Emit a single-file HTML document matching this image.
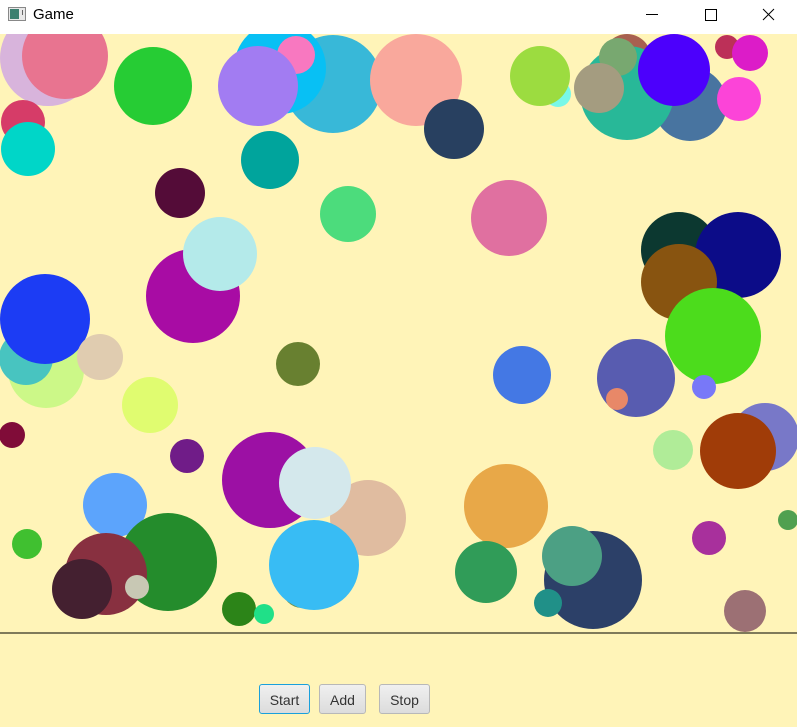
<!DOCTYPE html>
<html><head><style>
body{margin:0;width:797px;height:727px;overflow:hidden;background:#FFF4B8;font-family:"Segoe UI","Liberation Sans",sans-serif;position:relative}
.tb{position:absolute;left:0;top:0;width:797px;height:34px;background:#fff}
.tb .t{position:absolute;left:33px;top:6px;font-size:15px;color:#000}
.btn{position:absolute;top:684px;height:30px;border:1px solid #b8b8b8;border-radius:3px;background:linear-gradient(#f0f0f0,#dcdcdc);font-size:14px;color:#333;text-align:center;line-height:30px;box-sizing:border-box}
</style></head><body>
<div class="tb">
<svg style="position:absolute;left:8px;top:7px" width="18" height="14"><rect x="0.5" y="0.5" width="17" height="13" fill="#e8e8e8" stroke="#888"/><rect x="2" y="2" width="9" height="10" fill="#3c8070"/><rect x="14" y="3" width="1" height="5" fill="#666"/></svg>
<div class="t">Game</div>
<svg style="position:absolute;left:640px;top:0" width="157" height="34"><line x1="6" y1="14.5" x2="18" y2="14.5" stroke="#000"/><rect x="65.5" y="9.5" width="11" height="11" fill="none" stroke="#000"/><path d="M123 9L134 20M134 9L123 20" stroke="#000"/></svg>
</div>
<svg style="position:absolute;left:0;top:34px" width="797" height="600" viewBox="0 34 797 600">
<circle cx="48" cy="58" r="48" fill="#D8B4DC"/>
<circle cx="65" cy="56" r="43" fill="#E87490"/>
<circle cx="23" cy="122" r="22" fill="#D63C68"/>
<circle cx="28" cy="149" r="27" fill="#00D6C8"/>
<circle cx="153" cy="86" r="39" fill="#26CC34"/>
<circle cx="333" cy="84" r="49" fill="#38B8D8"/>
<circle cx="280" cy="68" r="46" fill="#08C0F4"/>
<circle cx="296" cy="55" r="19" fill="#F878C0"/>
<circle cx="258" cy="86" r="40" fill="#A27CF2"/>
<circle cx="416" cy="80" r="46" fill="#F9A89C"/>
<circle cx="454" cy="129" r="30" fill="#284060"/>
<circle cx="270" cy="160" r="29" fill="#00A49C"/>
<circle cx="180" cy="193" r="25" fill="#540C38"/>
<circle cx="348" cy="214" r="28" fill="#4CDC7C"/>
<circle cx="558" cy="94" r="13" fill="#78F8E8"/>
<circle cx="540" cy="76" r="30" fill="#9CDC40"/>
<circle cx="627" cy="58" r="24" fill="#A86050"/>
<circle cx="690" cy="104" r="37" fill="#4874A0"/>
<circle cx="627" cy="93" r="47" fill="#28B898"/>
<circle cx="618" cy="57" r="19" fill="#78A870"/>
<circle cx="599" cy="88" r="25" fill="#A49C80"/>
<circle cx="674" cy="70" r="36" fill="#4C00FC"/>
<circle cx="727" cy="47" r="12" fill="#BC3058"/>
<circle cx="750" cy="53" r="18" fill="#DC1CC8"/>
<circle cx="739" cy="99" r="22" fill="#FC44D8"/>
<circle cx="509" cy="218" r="38" fill="#E070A0"/>
<circle cx="679" cy="250" r="38" fill="#0C3830"/>
<circle cx="738" cy="255" r="43" fill="#0C0C88"/>
<circle cx="679" cy="282" r="38" fill="#885410"/>
<circle cx="713" cy="336" r="48" fill="#4CDC1C"/>
<circle cx="193" cy="296" r="47" fill="#A80CA4"/>
<circle cx="220" cy="254" r="37" fill="#B4EAEA"/>
<circle cx="46" cy="370" r="38" fill="#CCF888"/>
<circle cx="26" cy="358" r="27" fill="#48C4C0"/>
<circle cx="45" cy="319" r="45" fill="#1C3CF4"/>
<circle cx="100" cy="357" r="23" fill="#E0CCB0"/>
<circle cx="298" cy="364" r="22" fill="#688030"/>
<circle cx="150" cy="405" r="28" fill="#E0FC70"/>
<circle cx="522" cy="375" r="29" fill="#4478E4"/>
<circle cx="704" cy="387" r="12" fill="#7878F8"/>
<circle cx="636" cy="378" r="39" fill="#585CB0"/>
<circle cx="617" cy="399" r="11" fill="#E88868"/>
<circle cx="765" cy="437" r="34" fill="#7878C8"/>
<circle cx="738" cy="451" r="38" fill="#A03C08"/>
<circle cx="673" cy="450" r="20" fill="#B0EC98"/>
<circle cx="12" cy="435" r="13" fill="#800C38"/>
<circle cx="187" cy="456" r="17" fill="#701C88"/>
<circle cx="368" cy="518" r="38" fill="#E0BCA0"/>
<circle cx="270" cy="480" r="48" fill="#9C10A4"/>
<circle cx="315" cy="483" r="36" fill="#D4E8EC"/>
<circle cx="506" cy="506" r="42" fill="#E8A848"/>
<circle cx="115" cy="505" r="32" fill="#5CA4FC"/>
<circle cx="168" cy="562" r="49" fill="#248C2C"/>
<circle cx="106" cy="574" r="41" fill="#883040"/>
<circle cx="82" cy="589" r="30" fill="#442030"/>
<circle cx="137" cy="587" r="12" fill="#C8C8B4"/>
<circle cx="27" cy="544" r="15" fill="#40C030"/>
<circle cx="302" cy="588" r="20" fill="#709048"/>
<circle cx="314" cy="565" r="45" fill="#38BCF4"/>
<circle cx="239" cy="609" r="17" fill="#2C8418"/>
<circle cx="264" cy="614" r="10" fill="#20E088"/>
<circle cx="486" cy="572" r="31" fill="#309C58"/>
<circle cx="593" cy="580" r="49" fill="#2C4068"/>
<circle cx="572" cy="556" r="30" fill="#4CA084"/>
<circle cx="548" cy="603" r="14" fill="#209088"/>
<circle cx="709" cy="538" r="17" fill="#A8309C"/>
<circle cx="788" cy="520" r="10" fill="#50A050"/>
<circle cx="745" cy="611" r="21" fill="#9C7074"/>
</svg>
<div style="position:absolute;left:0;top:632px;width:797px;height:2px;background:#7F7A5A"></div>
<div class="btn" style="left:259px;width:51px;border-color:#1aa0dc">Start</div>
<div class="btn" style="left:319px;width:47px">Add</div>
<div class="btn" style="left:379px;width:51px">Stop</div>
</body></html>
